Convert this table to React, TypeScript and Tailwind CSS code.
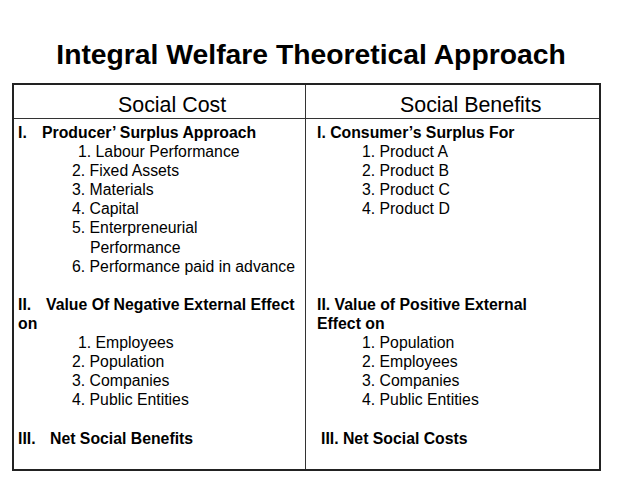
import React from "react";

type Line = { text: string; pl: number; bold?: boolean; label?: string; lw?: number };

const left: (Line | null)[] = [
  { label: "I.", lw: 24, text: "Producer’ Surplus Approach", pl: 4, bold: true },
  { text: "1. Labour Performance", pl: 64 },
  { text: "2. Fixed Assets", pl: 58 },
  { text: "3. Materials", pl: 58 },
  { text: "4. Capital", pl: 58 },
  { text: "5. Enterpreneurial", pl: 58 },
  { text: "Performance", pl: 76 },
  { text: "6. Performance paid in advance", pl: 58 },
  null,
  { label: "II.", lw: 28, text: "Value Of Negative External Effect", pl: 4, bold: true },
  { text: "on", pl: 4, bold: true },
  { text: "1. Employees", pl: 64 },
  { text: "2. Population", pl: 58 },
  { text: "3. Companies", pl: 58 },
  { text: "4. Public Entities", pl: 58 },
  null,
  { label: "III.", lw: 32, text: "Net Social Benefits", pl: 4, bold: true },
];

const right: (Line | null)[] = [
  { text: "I. Consumer’s Surplus For", pl: 11, bold: true },
  { text: "1. Product A", pl: 56 },
  { text: "2. Product B", pl: 56 },
  { text: "3. Product C", pl: 56 },
  { text: "4. Product D", pl: 56 },
  null,
  null,
  null,
  null,
  { text: "II. Value of Positive External", pl: 11, bold: true },
  { text: "Effect on", pl: 11, bold: true },
  { text: "1. Population", pl: 56 },
  { text: "2. Employees", pl: 56 },
  { text: "3. Companies", pl: 56 },
  { text: "4. Public Entities", pl: 56 },
  null,
  { text: "III. Net Social Costs", pl: 15, bold: true },
];

function Rows({ lines }: { lines: (Line | null)[] }) {
  return (
    <div className="pt-[4px]">
      {lines.map((l, i) =>
        l === null ? (
          <div key={i} className="h-[19.1px]" />
        ) : (
          <div
            key={i}
            className={`flex h-[19.1px] leading-[19.1px] whitespace-nowrap ${l.bold ? "font-bold" : ""}`}
            style={{ paddingLeft: l.pl }}
          >
            {l.label && (
              <span className="inline-block" style={{ width: l.lw }}>
                {l.label}
              </span>
            )}
            <span>{l.text}</span>
          </div>
        )
      )}
    </div>
  );
}

export default function App() {
  return (
    <div className="w-[638px] h-[478px] bg-white text-black font-['Liberation_Sans',Arial,sans-serif] pt-[38px]">
      <h1 className="text-center text-[28.3px] leading-[32px] font-bold pr-[16px]">
        Integral Welfare Theoretical Approach
      </h1>

      <div className="ml-[12px] mt-[13px] w-[589px] h-[388px] border-2 border-[#222] flex flex-col">
        {/* header */}
        <div className="flex h-[34px] border-b border-[#333] text-[21.4px] leading-[24px]">
          <div className="w-[292px] border-r border-[#333] pt-[8px] pl-[104px]">Social Cost</div>
          <div className="flex-1 pt-[8px] pl-[94px]">Social Benefits</div>
        </div>

        {/* body */}
        <div className="flex flex-1 text-[15.8px]">
          <div className="w-[292px] border-r border-[#333]">
            <Rows lines={left} />
          </div>
          <div className="flex-1">
            <Rows lines={right} />
          </div>
        </div>
      </div>
    </div>
  );
}
